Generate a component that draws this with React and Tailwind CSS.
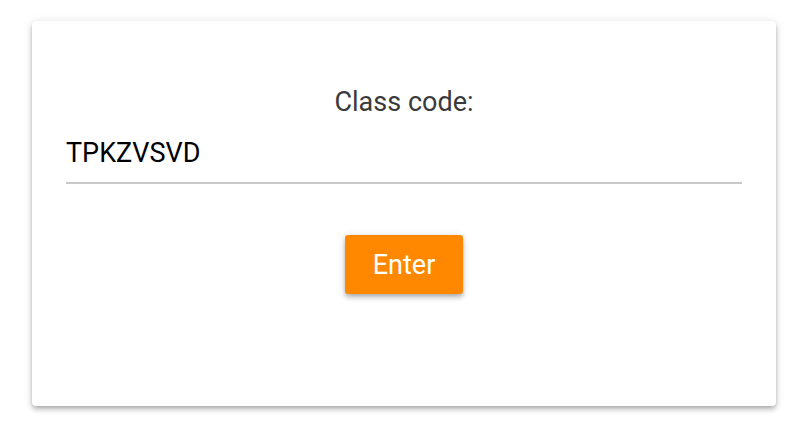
const App = () => {
  return (
    <div className="min-h-screen bg-white px-[32px] pt-[21px]" style={{ fontFamily: "Roboto, 'Liberation Sans', sans-serif" }}>
      <div className="w-[744px] rounded-[4px] bg-white px-[34px] pt-[65px] pb-[112px] shadow-[0_2px_4px_-1px_rgba(0,0,0,0.2),0_4px_5px_0_rgba(0,0,0,0.14),0_1px_10px_0_rgba(0,0,0,0.12)]">
        <p className="text-center text-[27px] leading-[32px] text-[#3a3a3a]">Class code:</p>
        <div className="mt-[19px] border-b-2 border-[#c8c8c8] pb-[13px]">
          <input
            className="block w-full bg-transparent text-[27px] leading-[32px] text-black outline-none"
            defaultValue="TPKZVSVD"
          />
        </div>
        <div className="mt-[51px] flex justify-center">
          <button className="h-[59px] w-[118px] rounded-[3px] bg-[#ff8800] pt-[2px] text-[27px] text-white shadow-[0_2px_4px_-1px_rgba(0,0,0,0.2),0_4px_5px_0_rgba(0,0,0,0.14),0_1px_10px_0_rgba(0,0,0,0.12)]">
            Enter
          </button>
        </div>
      </div>
    </div>
  );
};

export default App;
